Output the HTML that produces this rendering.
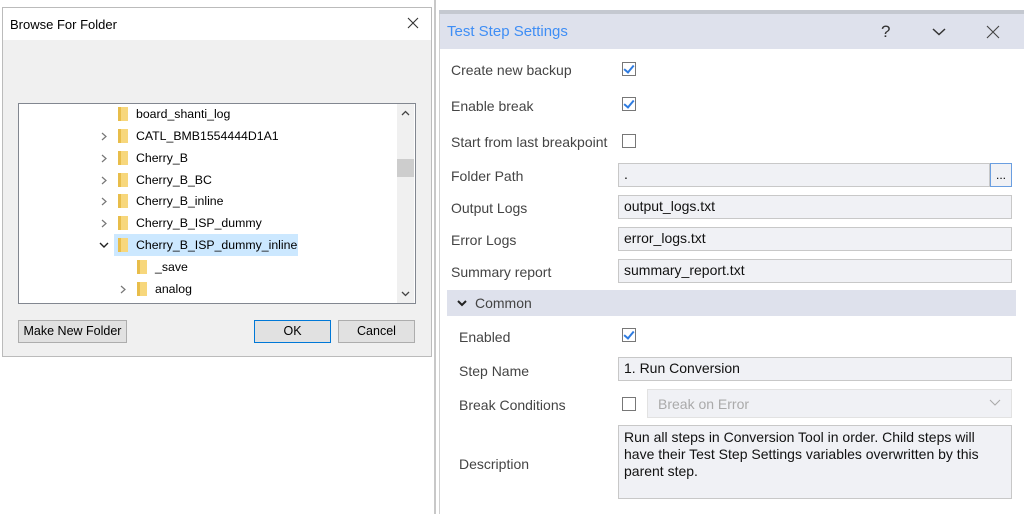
<!DOCTYPE html>
<html><head><style>
*{margin:0;padding:0;box-sizing:border-box}
body{width:1024px;height:514px;background:#fff;position:relative;overflow:hidden;font-family:"Liberation Sans",sans-serif}
.a{position:absolute}
.l{font-size:12.3px;color:#000}
.r{font-size:14px;color:#444}
.f{position:absolute;left:618px;width:394px;height:24px;background:#f0f1f5;border:1px solid #c8c8c8;font-size:14px;color:#111;padding:2px 5px}
.cb{position:absolute;width:14px;height:14px;border:1px solid #777;background:#fff}
.ck::after{content:"";position:absolute;left:3px;top:0px;width:4px;height:8px;border:solid #2e7be0;border-width:0 2.5px 2.5px 0;transform:rotate(40deg)}
.fold{position:absolute;width:10px;height:14px;background:linear-gradient(90deg,#e8bd4a 0 3px,#f7d77c 3px)}
.chev{position:absolute;width:8px;height:10px}
.btn{position:absolute;height:23px;background:#e1e1e1;border:1px solid #adadad;font-size:12.5px;text-align:center;line-height:21px}
svg{position:absolute}
</style></head><body>
<div class="a" style="left:2px;top:7px;width:430px;height:350px;background:#f0f0f0;border:1px solid #bbb"></div>
<div class="a" style="left:3px;top:8px;width:428px;height:32px;background:#fff"></div>
<div class="a l" style="left:10px;top:17px;font-size:13px">Browse For Folder</div>
<svg style="left:407px;top:17px" width="12" height="12"><path d="M1 1L11 11M11 1L1 11" stroke="#333" stroke-width="1.1"/></svg>
<div class="a" style="left:18px;top:103px;width:398px;height:201px;background:#fff;border:1px solid #828790"></div>
<div class="a" style="left:397px;top:104px;width:17px;height:199px;background:#f0f0f0"></div>
<div class="a" style="left:397px;top:159px;width:17px;height:18px;background:#cdcdcd"></div>
<svg style="left:401px;top:110px" width="9" height="6"><path d="M1 5L4.5 1.5L8 5" stroke="#444" fill="none" stroke-width="1.3"/></svg>
<svg style="left:401px;top:291px" width="9" height="6"><path d="M1 1L4.5 4.5L8 1" stroke="#444" fill="none" stroke-width="1.3"/></svg>
<div class="a" style="left:114px;top:234px;width:184px;height:22px;background:#cce8ff"></div>
<div class="fold" style="left:118px;top:107px"></div><div class="a l" style="left:136px;top:107px">board_shanti_log</div>
<svg style="left:101px;top:132px" width="6" height="9"><path d="M1 1L5 4.5L1 8" stroke="#777" fill="none" stroke-width="1.2"/></svg><div class="fold" style="left:118px;top:129px"></div><div class="a l" style="left:136px;top:129px">CATL_BMB1554444D1A1</div>
<svg style="left:101px;top:154px" width="6" height="9"><path d="M1 1L5 4.5L1 8" stroke="#777" fill="none" stroke-width="1.2"/></svg><div class="fold" style="left:118px;top:151px"></div><div class="a l" style="left:136px;top:151px">Cherry_B</div>
<svg style="left:101px;top:176px" width="6" height="9"><path d="M1 1L5 4.5L1 8" stroke="#777" fill="none" stroke-width="1.2"/></svg><div class="fold" style="left:118px;top:173px"></div><div class="a l" style="left:136px;top:173px">Cherry_B_BC</div>
<svg style="left:101px;top:197px" width="6" height="9"><path d="M1 1L5 4.5L1 8" stroke="#777" fill="none" stroke-width="1.2"/></svg><div class="fold" style="left:118px;top:194px"></div><div class="a l" style="left:136px;top:194px">Cherry_B_inline</div>
<svg style="left:101px;top:219px" width="6" height="9"><path d="M1 1L5 4.5L1 8" stroke="#777" fill="none" stroke-width="1.2"/></svg><div class="fold" style="left:118px;top:216px"></div><div class="a l" style="left:136px;top:216px">Cherry_B_ISP_dummy</div>
<svg style="left:99px;top:242px" width="10" height="6"><path d="M1 1L5 5L9 1" stroke="#222" fill="none" stroke-width="1.4"/></svg><div class="fold" style="left:118px;top:238px"></div><div class="a l" style="left:136px;top:238px">Cherry_B_ISP_dummy_inline</div>
<div class="fold" style="left:137px;top:260px"></div><div class="a l" style="left:155px;top:260px">_save</div>
<svg style="left:120px;top:285px" width="6" height="9"><path d="M1 1L5 4.5L1 8" stroke="#777" fill="none" stroke-width="1.2"/></svg><div class="fold" style="left:137px;top:282px"></div><div class="a l" style="left:155px;top:282px">analog</div>
<div class="btn" style="left:18px;top:320px;width:109px">Make New Folder</div>
<div class="btn" style="left:254px;top:320px;width:77px;border:1px solid #0078d7">OK</div>
<div class="btn" style="left:338px;top:320px;width:77px">Cancel</div>
<div class="a" style="left:434px;top:0;width:2px;height:514px;background:#c8c8c8"></div>
<div class="a" style="left:439px;top:10px;width:585px;height:4px;background:#c4c8d0"></div>
<div class="a" style="left:439px;top:14px;width:585px;height:35px;background:#dee1ec"></div>
<div class="a" style="left:439px;top:14px;width:1px;height:500px;background:#d0d0d0"></div>
<div class="a" style="left:447px;top:23px;font-size:15px;color:#3f8ef5">Test Step Settings</div>
<div class="a" style="left:881px;top:22px;font-size:17px;color:#333">?</div>
<svg style="left:932px;top:28px" width="14" height="8"><path d="M1 1L7 6.5L13 1" stroke="#333" fill="none" stroke-width="1.5"/></svg>
<svg style="left:986px;top:25px" width="14" height="14"><path d="M1 1L13 13M13 1L1 13" stroke="#444" stroke-width="1.1"/></svg>
<div class="a r" style="left:451px;top:62px">Create new backup</div><div class="cb ck" style="left:622px;top:62px"></div>
<div class="a r" style="left:451px;top:98px">Enable break</div><div class="cb ck" style="left:622px;top:97px"></div>
<div class="a r" style="left:451px;top:134px">Start from last breakpoint</div><div class="cb" style="left:622px;top:134px"></div>
<div class="a r" style="left:451px;top:168px">Folder Path</div>
<div class="f" style="top:163px;width:372px">.</div>
<div class="a" style="left:990px;top:163px;width:22px;height:24px;border:1px solid #6a9ee0;background:#f0f1f5;font-size:12px;text-align:center;line-height:22px">...</div>
<div class="a r" style="left:451px;top:200px">Output Logs</div><div class="f" style="top:195px">output_logs.txt</div>
<div class="a r" style="left:451px;top:232px">Error Logs</div><div class="f" style="top:227px">error_logs.txt</div>
<div class="a r" style="left:451px;top:264px">Summary report</div><div class="f" style="top:259px">summary_report.txt</div>
<div class="a" style="left:447px;top:290px;width:569px;height:26px;background:#dee1ec"></div>
<svg style="left:457px;top:300px" width="10" height="7"><path d="M1 1L5 5L9 1" stroke="#222" fill="none" stroke-width="2"/></svg>
<div class="a r" style="left:475px;top:295px">Common</div>
<div class="a r" style="left:459px;top:329px">Enabled</div><div class="cb ck" style="left:622px;top:328px"></div>
<div class="a r" style="left:459px;top:363px">Step Name</div><div class="f" style="top:357px">1. Run Conversion</div>
<div class="a r" style="left:459px;top:397px">Break Conditions</div><div class="cb" style="left:622px;top:397px"></div>
<div class="a" style="left:647px;top:389px;width:365px;height:29px;background:#f0f1f5;border:1px solid #e2e2e2;font-size:14px;color:#aaa;padding:6px 10px">Break on Error</div>
<svg style="left:989px;top:399px" width="12" height="7"><path d="M1 1L6 6L11 1" stroke="#aaa" fill="none" stroke-width="1.1"/></svg>
<div class="a r" style="left:459px;top:456px">Description</div>
<div class="f" style="top:425px;height:74px;line-height:17px;padding:3px 5px">Run all steps in Conversion Tool in order. Child steps will have their Test Step Settings variables overwritten by this parent step.</div>
</body></html>
